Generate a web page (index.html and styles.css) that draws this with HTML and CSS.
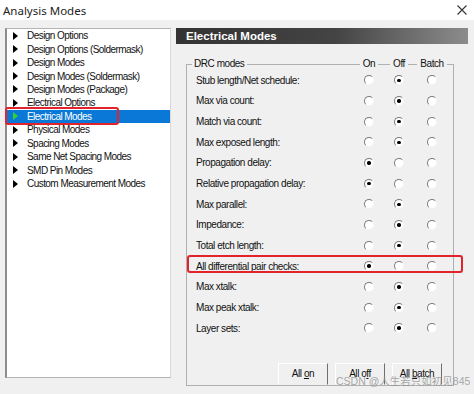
FILE: index.html
```html
<!DOCTYPE html>
<html lang="en">
<head>
<meta charset="UTF-8">
<meta name="viewport" content="width=device-width, initial-scale=1.0">
<title>Analysis Modes</title>
<link rel="stylesheet" href="styles.css">
</head>
<body>

<div class="titlebar">
  <span class="title">Analysis Modes</span>
  <svg class="close" width="10" height="10" viewBox="0 0 10 10">
    <path d="M0.5 0.5 L9.5 9.5 M9.5 0.5 L0.5 9.5" stroke="#333" stroke-width="1.1" fill="none"/>
  </svg>
</div>

<div class="main">
  <!-- mode tree -->
  <ul class="tree">
    <li><i class="arrow"></i>Design Options</li>
    <li><i class="arrow"></i>Design Options (Soldermask)</li>
    <li><i class="arrow"></i>Design Modes</li>
    <li><i class="arrow"></i>Design Modes (Soldermask)</li>
    <li><i class="arrow"></i>Design Modes (Package)</li>
    <li><i class="arrow"></i>Electrical Options</li>
    <li class="selected"><i class="arrow"></i>Electrical Modes</li>
    <li><i class="arrow"></i>Physical Modes</li>
    <li><i class="arrow"></i>Spacing Modes</li>
    <li><i class="arrow"></i>Same Net Spacing Modes</li>
    <li><i class="arrow"></i>SMD Pin Modes</li>
    <li><i class="arrow"></i>Custom Measurement Modes</li>
  </ul>

  <!-- settings page -->
  <div class="panel">
    <div class="panel-head">Electrical Modes</div>
    <fieldset class="group">
      <legend class="group-head">
        <span class="h-title">DRC modes</span>
        <span class="h-col">On</span>
        <span class="h-col">Off</span>
        <span class="h-col wide">Batch</span>
        <span class="h-end"></span>
      </legend>
      <div class="rows">
        <div class="row"><span class="label">Stub length/Net schedule:</span><span class="radio"></span><span class="radio checked"></span><span class="radio"></span></div>
        <div class="row"><span class="label">Max via count:</span><span class="radio"></span><span class="radio checked"></span><span class="radio"></span></div>
        <div class="row"><span class="label">Match via count:</span><span class="radio"></span><span class="radio checked"></span><span class="radio"></span></div>
        <div class="row"><span class="label">Max exposed length:</span><span class="radio"></span><span class="radio checked"></span><span class="radio"></span></div>
        <div class="row"><span class="label">Propagation delay:</span><span class="radio checked"></span><span class="radio"></span><span class="radio"></span></div>
        <div class="row"><span class="label">Relative propagation delay:</span><span class="radio checked"></span><span class="radio"></span><span class="radio"></span></div>
        <div class="row"><span class="label">Max parallel:</span><span class="radio"></span><span class="radio checked"></span><span class="radio"></span></div>
        <div class="row"><span class="label">Impedance:</span><span class="radio"></span><span class="radio checked"></span><span class="radio"></span></div>
        <div class="row"><span class="label">Total etch length:</span><span class="radio"></span><span class="radio checked"></span><span class="radio"></span></div>
        <div class="row"><span class="label">All differential pair checks:</span><span class="radio checked"></span><span class="radio"></span><span class="radio"></span></div>
        <div class="row"><span class="label">Max xtalk:</span><span class="radio"></span><span class="radio checked"></span><span class="radio"></span></div>
        <div class="row"><span class="label">Max peak xtalk:</span><span class="radio"></span><span class="radio checked"></span><span class="radio"></span></div>
        <div class="row"><span class="label">Layer sets:</span><span class="radio"></span><span class="radio checked"></span><span class="radio"></span></div>
      </div>
      <div class="buttons">
        <button type="button">All <u>o</u>n</button>
        <button type="button">All o<u>f</u>f</button>
        <button type="button">All <u>b</u>atch</button>
      </div>
    </fieldset>
  </div>
</div>

<!-- red annotation boxes -->
<div class="mark mark-tree"></div>
<div class="mark mark-row"></div>
<div class="watermark">CSDN @人生若只如初见845</div>

</body>
</html>
```

FILE: styles.css
```css
body {
  margin: 0;
  width: 474px;
  height: 394px;
  overflow: hidden;
  background: #f0f0f0;
  font-family: "Liberation Sans", Arial, sans-serif;
  font-size: 10px;
  letter-spacing: -0.45px;
  color: #111;
  position: relative;
}
.titlebar {
  height: 20px;
  background: #fff;
  display: flex;
  align-items: center;
  justify-content: space-between;
  padding: 0 7px 0 3px;
  letter-spacing: 0;
}
.title {
  font-family: "Noto Sans", sans-serif;
  font-size: 11.5px;
  color: #222;
}
.main {
  display: flex;
  gap: 5px;
  padding: 8px 4px 0 5px;
}
.tree {
  list-style-type: none;
  margin: 0;
  padding: 0;
  width: 166px;
  height: 350px;
  box-sizing: border-box;
  background: #fff;
  border-left: 2px solid #8c8c8c;
  border-top: 1px solid #b4b4b4;
  border-right: 1px solid #d8d8d8;
  border-bottom: 1px solid #b4b4b4;
}
.tree li {
  height: 13.45px;
  display: flex;
  align-items: center;
  padding-left: 6px;
  white-space: nowrap;
  letter-spacing: -0.55px;
}
.tree li.selected {
  background: #0a78d6;
  color: #fff;
}
.arrow {
  width: 0;
  height: 0;
  border-left: 5px solid #000;
  border-top: 4.5px solid transparent;
  border-bottom: 4.5px solid transparent;
  margin-right: 9px;
}
.selected .arrow {
  border-left-color: #2ed32e;
}
.panel {
  flex: 1;
}
.panel-head {
  height: 16px;
  line-height: 16px;
  margin-right: 2px;
  padding-left: 10px;
  background: linear-gradient(to right, #333 0%, #444 55%, #8c8c8c 100%);
  color: #fff;
  font-weight: bold;
  font-size: 11.5px;
  letter-spacing: 0;
}
.group {
  margin: 14px 0 0 10px;
  padding: 0;
  width: 268px;
  height: 328px;
  box-sizing: border-box;
  border: 1px solid #b0b0b0;
  border-top: none;
}
.group-head {
  display: flex;
  width: 100%;
  padding: 0;
  line-height: 12px;
}
.group-head span {
  display: flex;
  align-items: center;
  justify-content: center;
}
.group-head span::before, .group-head span::after {
  content: "";
  flex: 1;
  border-top: 1px solid #b0b0b0;
}
.group-head span::before {
  margin-right: 3px;
}
.group-head span::after {
  margin-left: 3px;
}
.h-title {
  width: 167px;
}
.h-title::before {
  flex: 0 0 5px !important;
  margin-right: 2px !important;
}
.h-col {
  width: 30px;
}
.h-col.wide {
  width: 36px;
}
.h-end {
  flex: 1;
}
.h-end::before {
  margin: 0 !important;
}
.h-end::after {
  display: none;
}
.rows {
  padding-left: 9px;
}
.row {
  display: grid;
  grid-template-columns: 158px 30px 30px 36px;
  height: 20.67px;
  align-items: center;
}
.radio {
  justify-self: center;
  width: 10px;
  height: 10px;
  box-sizing: border-box;
  border-radius: 50%;
  border: 1px solid;
  border-color: #7a7a7a #f4f4f4 #f4f4f4 #7a7a7a;
  background: #fff;
  display: flex;
  align-items: center;
  justify-content: center;
}
.radio.checked::after {
  content: "";
  width: 3.5px;
  height: 3.5px;
  border-radius: 50%;
  background: #000;
}
.buttons {
  display: flex;
  justify-content: flex-end;
  gap: 7px;
  margin-top: 24px;
  padding-right: 11px;
}
.buttons button {
  width: 50px;
  height: 22px;
  padding: 0;
  background: #f0f0f0;
  border: 1px solid;
  border-color: #fff #6e6e6e #f0f0f0 #fff;
  font-family: inherit;
  font-size: 10px;
  letter-spacing: -0.45px;
  color: #111;
}
.mark {
  position: absolute;
  box-sizing: border-box;
  border: 2px solid #e2232b;
  border-radius: 3px;
}
.mark-tree {
  left: 5px;
  top: 107px;
  width: 114px;
  height: 18px;
}
.mark-row {
  left: 187px;
  top: 255px;
  width: 276px;
  height: 18px;
}
.watermark {
  position: absolute;
  left: 336px;
  top: 373px;
  font-family: "Liberation Sans", "Noto Sans CJK SC", sans-serif;
  font-size: 10.5px;
  letter-spacing: 0;
  color: rgba(140, 140, 140, 0.75);
  white-space: nowrap;
}
```
